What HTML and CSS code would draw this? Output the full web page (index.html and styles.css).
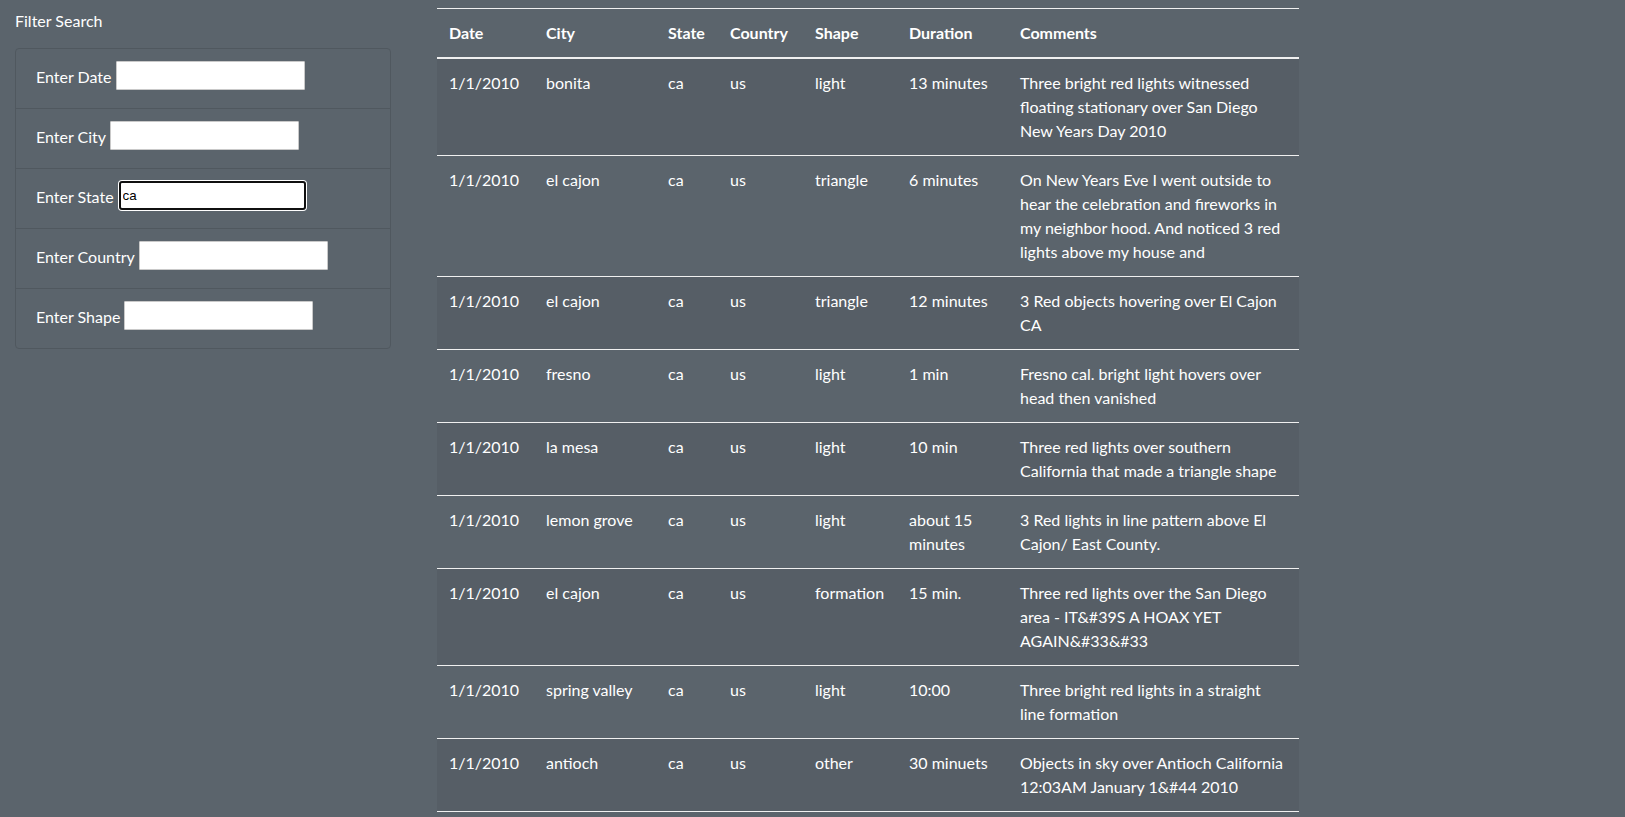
FILE: index.html
```html
<!DOCTYPE html>
<html lang="en">
<head>
<meta charset="utf-8">
<title>UFO Sightings</title>
<link rel="stylesheet" href="styles.css">
</head>
<body>
<div class="page">
  <aside class="sidebar">
    <div class="filter-title">Filter Search</div>
    <ul class="filters">
      <li class="filter-item"><label class="filter-label" for="datetime">Enter Date</label><input class="filter-input" id="datetime" type="text"></li>
      <li class="filter-item"><label class="filter-label" for="city">Enter City</label><input class="filter-input" id="city" type="text"></li>
      <li class="filter-item"><label class="filter-label" for="state">Enter State</label><input class="filter-input is-focused" id="state" type="text" value="ca"></li>
      <li class="filter-item"><label class="filter-label" for="country">Enter Country</label><input class="filter-input" id="country" type="text"></li>
      <li class="filter-item"><label class="filter-label" for="shape">Enter Shape</label><input class="filter-input" id="shape" type="text"></li>
    </ul>
  </aside>
  <main class="results">
    <table class="ufo-table">
      <colgroup>
        <col class="c-date"><col class="c-city"><col class="c-state"><col class="c-country"><col class="c-shape"><col class="c-duration"><col class="c-comments">
      </colgroup>
      <thead>
        <tr><th>Date</th><th>City</th><th>State</th><th>Country</th><th>Shape</th><th>Duration</th><th>Comments</th></tr>
      </thead>
      <tbody>
        <tr><td>1/1/2010</td><td>bonita</td><td>ca</td><td>us</td><td>light</td><td>13 minutes</td><td>Three bright red lights witnessed floating stationary over San Diego New Years Day 2010</td></tr>
        <tr><td>1/1/2010</td><td>el cajon</td><td>ca</td><td>us</td><td>triangle</td><td>6 minutes</td><td>On New Years Eve I went outside to hear the celebration and fireworks in my neighbor hood. And noticed 3 red lights above my house and</td></tr>
        <tr><td>1/1/2010</td><td>el cajon</td><td>ca</td><td>us</td><td>triangle</td><td>12 minutes</td><td>3 Red objects hovering over El Cajon CA</td></tr>
        <tr><td>1/1/2010</td><td>fresno</td><td>ca</td><td>us</td><td>light</td><td>1 min</td><td>Fresno cal. bright light hovers over head then vanished</td></tr>
        <tr><td>1/1/2010</td><td>la mesa</td><td>ca</td><td>us</td><td>light</td><td>10 min</td><td>Three red lights over southern California that made a triangle shape</td></tr>
        <tr><td>1/1/2010</td><td>lemon grove</td><td>ca</td><td>us</td><td>light</td><td>about 15 minutes</td><td>3 Red lights in line pattern above El Cajon/ East County.</td></tr>
        <tr><td>1/1/2010</td><td>el cajon</td><td>ca</td><td>us</td><td>formation</td><td>15 min.</td><td>Three red lights over the San Diego area - IT&amp;#39S A HOAX YET AGAIN&amp;#33&amp;#33</td></tr>
        <tr><td>1/1/2010</td><td>spring valley</td><td>ca</td><td>us</td><td>light</td><td>10:00</td><td>Three bright red lights in a straight line formation</td></tr>
        <tr><td>1/1/2010</td><td>antioch</td><td>ca</td><td>us</td><td>other</td><td>30 minuets</td><td>Objects in sky over Antioch California 12:03AM January 1&amp;#44 2010</td></tr>
      </tbody>
    </table>
  </main>
</div>
</body>
</html>
```
FILE: styles.css
```css
html, body {
  margin: 0;
  padding: 0;
}
body {
  background: #5b646c;
  color: #ffffff;
  font-family: Lato, "Open Sans", sans-serif;
  font-size: 16px;
  line-height: 24px;
}
.page {
  display: flex;
  align-items: flex-start;
  padding-top: 8px;
  gap: 46px;
  padding-left: 15px;
}
.sidebar {
  width: 376px;
  flex: none;
  padding-top: 1px;
}
.filter-title {
  font-size: 16px;
  line-height: 24px;
  margin-bottom: 15px;
}
.filters {
  list-style: none;
  margin: 0;
  padding: 0;
  border: 1px solid #50585f;
  border-radius: 4px;
}
.filter-item {
  display: flex;
  align-items: flex-start;
  gap: 4px;
  height: 60px;
  box-sizing: border-box;
  padding: 12px 20px 0;
  border-top: 1px solid #50585f;
}
.filter-item:first-child {
  border-top: 0;
  height: 59px;
}
.filter-label {
  padding-top: 4px;
}
.filter-input {
  width: 189px;
  height: 29px;
  box-sizing: border-box;
  margin: 0;
  padding: 1px 3px;
  border: 1px solid #c9c9c9;
  border-radius: 1px;
  background: #ffffff;
  color: #000000;
  font-family: "Liberation Sans", Arial, sans-serif;
  font-size: 13.33px;
  outline: none;
}
.filter-input.is-focused {
  width: 187px;
  border: 2px solid #101010;
  border-radius: 3px;
  box-shadow: 0 0 0 1px #ffffff;
  padding-left: 2px;
  margin-left: 1px;
}
.results {
  flex: none;
}
.ufo-table {
  width: 862px;
  table-layout: fixed;
  border-collapse: collapse;
}
.c-date { width: 97px; }
.c-city { width: 122px; }
.c-state { width: 62px; }
.c-country { width: 85px; }
.c-shape { width: 94px; }
.c-duration { width: 111px; }
.c-comments { width: 291px; }
.ufo-table th,
.ufo-table td {
  padding: 12px;
  text-align: left;
  vertical-align: top;
  border-top: 1px solid #f0f0f0;
}
.ufo-table th {
  font-weight: 700;
  border-bottom: 2px solid #f0f0f0;
}
.ufo-table tbody tr:nth-child(odd) {
  background: #565e66;
}
.ufo-table tbody tr:last-child td {
  border-bottom: 1px solid #f0f0f0;
}
```
